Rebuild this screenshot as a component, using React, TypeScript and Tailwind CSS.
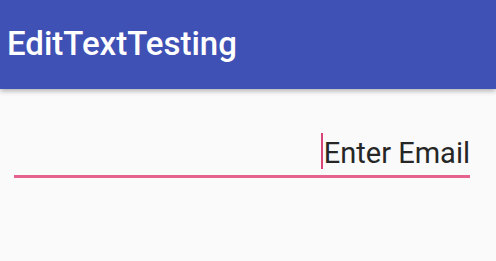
export default function App() {
  return (
    <div className="w-[496px] h-[261px] bg-[#fafafa] overflow-hidden" style={{ fontFamily: "Roboto, 'Noto Sans', sans-serif" }}>
      <div className="relative h-[89px] bg-[#3f51b5] shadow-[0_2px_5px_rgba(0,0,0,0.3)] flex items-center pl-[7px]">
        <span className="text-white text-[33px] font-medium leading-none tracking-[0px] mt-[-2px]">EditTextTesting</span>
      </div>
      <div className="mt-[43px] mx-[14px] w-[456px]">
        <div className="flex justify-end items-center h-[43px]">
          <span className="w-[2px] h-[36px] bg-[#d9457a] mr-[1px] mt-[-6px]" />
          <span className="text-[#262626] text-[29px] leading-none">Enter Email</span>
        </div>
        <div className="h-[3px] bg-[#e5628e]" />
      </div>
    </div>
  );
}
